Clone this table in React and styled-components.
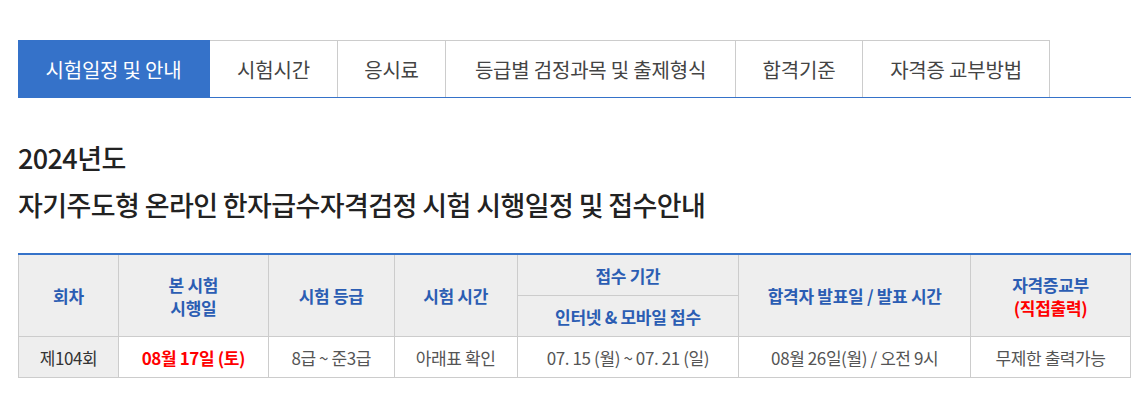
import React from 'react';
import styled, { createGlobalStyle } from 'styled-components';

const GlobalStyle = createGlobalStyle`
    body {
        margin: 0;
        background: #fff;
        font-family: "Noto Sans CJK KR", "Noto Sans", sans-serif;
        color: #333;
    }
`;

const Wrap = styled.div`
    width: 1113px;
    padding: 40px 0 0 18px;
`;

const TabList = styled.ul`
    display: flex;
    margin: 0;
    padding: 0;
    list-style: none;
    border-bottom: 1px solid #3572c9;
`;

const Tab = styled.li`
    width: ${p => p.w}px;
    height: 57px;
    box-sizing: border-box;
    display: flex;
    align-items: center;
    justify-content: center;
    font-size: 20px;
    letter-spacing: -0.2px;
    color: ${p => (p.active ? '#fff' : '#444')};
    background: ${p => (p.active ? '#3572c9' : '#fff')};
    border-top: 1px solid ${p => (p.active ? '#3572c9' : '#ccc')};
    border-right: 1px solid ${p => (p.active ? '#3572c9' : '#ccc')};
`;

const Title = styled.h2`
    margin: 36px 0 0;
    font-size: 27px;
    font-weight: 500;
    line-height: 47px;
    letter-spacing: -0.6px;
    color: #222;
`;

const Table = styled.table`
    margin-top: 25px;
    width: 100%;
    border-collapse: collapse;
    border-top: 2px solid #3572c9;
    font-size: 17px;
    text-align: center;
`;

const Th = styled.th`
    height: 40px;
    padding: 0;
    background: #eee;
    border: 1px solid #ccc;
    border-top: none;
    color: #2b5db3;
    font-weight: 700;
    line-height: 23px;
    letter-spacing: -0.3px;
`;

const Td = styled.td`
    height: 40px;
    padding: 0;
    border: 1px solid #ccc;
    color: ${p => (p.red ? '#f00' : p.head ? '#333' : '#555')};
    background: ${p => (p.head ? '#eee' : '#fff')};
    font-weight: ${p => (p.red ? 700 : 400)};
    letter-spacing: -0.4px;
`;

const Red = styled.span`
    color: #f00;
`;

const tabs = [
    ['시험일정 및 안내', 192],
    ['시험시간', 128],
    ['응시료', 108],
    ['등급별 검정과목 및 출제형식', 290],
    ['합격기준', 127],
    ['자격증 교부방법', 187],
];

export default function App() {
    return (
        <Wrap>
            <GlobalStyle />
            <TabList>
                {tabs.map(([label, w], i) => (
                    <Tab key={label} w={w} active={i === 0}>{label}</Tab>
                ))}
            </TabList>
            <Title>
                2024년도<br />
                자기주도형 온라인 한자급수자격검정 시험 시행일정 및 접수안내
            </Title>
            <Table>
                <colgroup>
                    <col style={{ width: 100 }} />
                    <col style={{ width: 150 }} />
                    <col style={{ width: 126 }} />
                    <col style={{ width: 123 }} />
                    <col style={{ width: 222 }} />
                    <col style={{ width: 232 }} />
                    <col style={{ width: 160 }} />
                </colgroup>
                <thead>
                    <tr>
                        <Th rowSpan={2}>회차</Th>
                        <Th rowSpan={2}>본 시험<br />시행일</Th>
                        <Th rowSpan={2}>시험 등급</Th>
                        <Th rowSpan={2}>시험 시간</Th>
                        <Th>접수 기간</Th>
                        <Th rowSpan={2}>합격자 발표일 / 발표 시간</Th>
                        <Th rowSpan={2}>자격증교부<br /><Red>(직접출력)</Red></Th>
                    </tr>
                    <tr>
                        <Th>인터넷 &amp; 모바일 접수</Th>
                    </tr>
                </thead>
                <tbody>
                    <tr>
                        <Td head>제104회</Td>
                        <Td red>08월 17일 (토)</Td>
                        <Td>8급 ~ 준3급</Td>
                        <Td>아래표 확인</Td>
                        <Td>07. 15 (월) ~ 07. 21 (일)</Td>
                        <Td>08월 26일(월) / 오전 9시</Td>
                        <Td>무제한 출력가능</Td>
                    </tr>
                </tbody>
            </Table>
        </Wrap>
    );
}
